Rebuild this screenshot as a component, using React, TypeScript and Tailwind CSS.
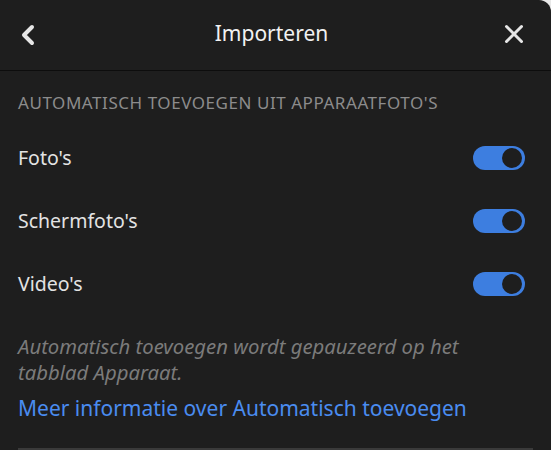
import { ChevronLeft, X } from 'lucide-react';

const SOURCES = ["Foto's", "Schermfoto's", "Video's"];

function Toggle() {
  return (
    <div className="w-[52px] h-[24px] rounded-full bg-[#3d7ee0] flex items-center justify-end pr-[3px]">
      <div className="w-[20px] h-[20px] rounded-full bg-[#1e1e1e]" />
    </div>
  );
}

export default function App() {
  return (
    <div className="w-[551px] h-[450px] bg-[#e8e8e8] overflow-hidden">
      <div
        className="h-full bg-[#1e1e1e] rounded-tr-[12px] flex flex-col"
        style={{ fontFamily: '"Noto Sans", "Open Sans", sans-serif' }}
      >
        {/* Header */}
        <header className="h-[71px] flex items-center justify-between pl-[12px] pr-[22px] border-b border-[#0d0d0d] shrink-0">
          <ChevronLeft className="w-[32px] h-[32px] text-[#e6e6e6]" strokeWidth={3} />
          <h1 className="text-[21px] text-[#f2f2f2] -mt-[3px]">Importeren</h1>
          <X className="w-[30px] h-[30px] text-[#e6e6e6] -mt-[2px]" strokeWidth={2.4} />
        </header>

        <div className="px-[18px] flex-1 flex flex-col">
          <div className="pt-[21px] text-[17px] tracking-[0.55px] text-[#8c8c8c] uppercase leading-[22px]">
            Automatisch toevoegen uit apparaatfoto's
          </div>

          <div className="mt-[12px] flex flex-col">
            {SOURCES.map((s) => (
              <div key={s} className="h-[63px] flex items-center justify-between pr-[8px]">
                <span className="text-[19.5px] text-[#e3e3e3]">{s}</span>
                <Toggle />
              </div>
            ))}
          </div>

          <p className="mt-[18px] w-[480px] text-[20.3px] italic text-[#7b7b7b] leading-[26px]">
            Automatisch toevoegen wordt gepauzeerd op het tabblad Apparaat.
          </p>
          <a className="mt-[10px] text-[21px] text-[#4a8cf0] leading-[26px]">
            Meer informatie over Automatisch toevoegen
          </a>

          <div className="mt-auto h-[2px] bg-[#3a3a3a]" />
        </div>
      </div>
    </div>
  );
}
